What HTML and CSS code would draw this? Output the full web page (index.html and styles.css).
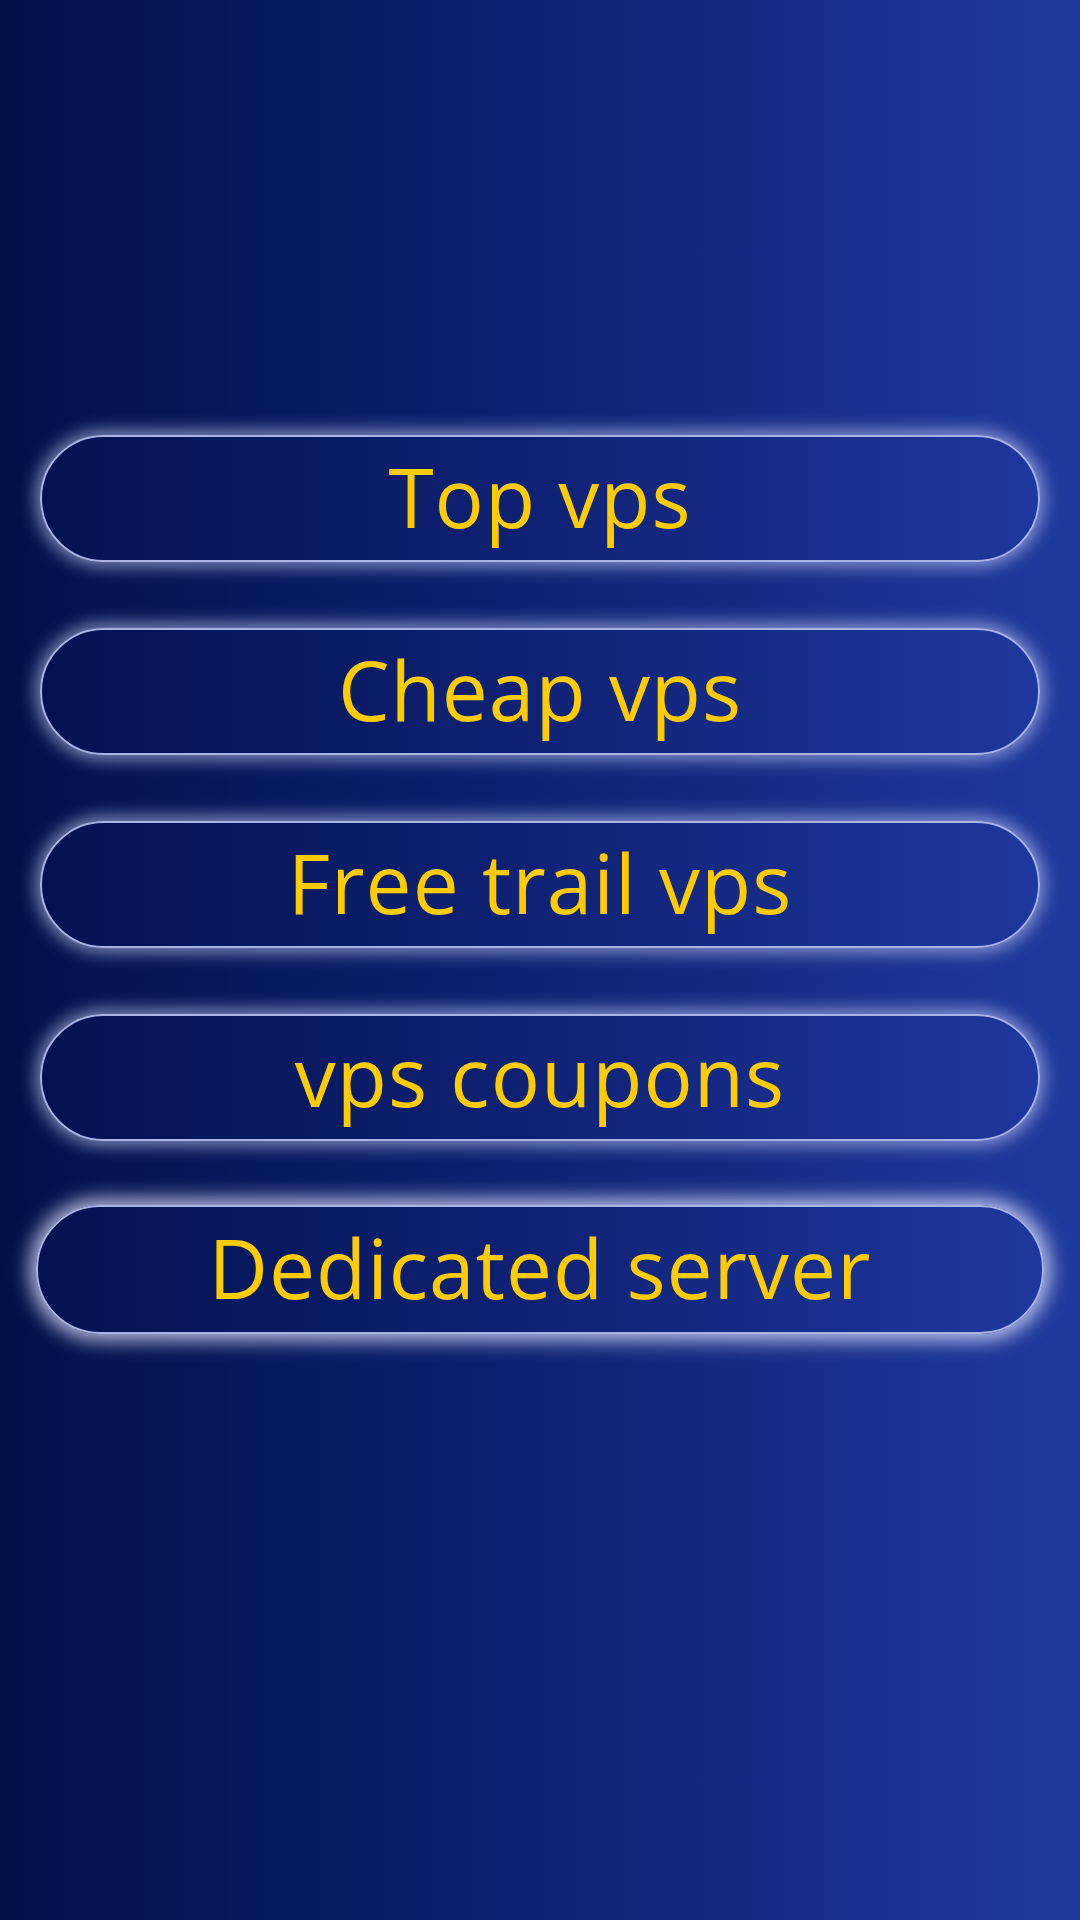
FILE: index.html
```html
<!DOCTYPE html>
<html lang="en">

<head>
    <meta charset="UTF-8">
    <meta name="viewport" content="width=device-width, initial-scale=1.0">
    <title>VPS</title>
    <link rel="stylesheet" href="styles.css">
</head>

<body>
    <div class="menu">
        <button class="menu-button">Top vps</button>
        <button class="menu-button">Cheap vps</button>
        <button class="menu-button">Free trail vps</button>
        <button class="menu-button">vps coupons</button>
        <button class="menu-button active">Dedicated server</button>
    </div>
</body>

</html>
```

FILE: styles.css
```css
html,
body {
    margin: 0;
    height: 100%;
}

body {
    font-family: "Open Sans", "Noto Sans", sans-serif;
    background: linear-gradient(to right, #001046 0%, #0d2070 45%, #1e3aa0 100%);
}

.menu {
    display: flex;
    flex-direction: column;
    align-items: center;
    gap: 66px;
    padding-top: 435px;
}

.menu-button {
    width: 1000px;
    height: 127px;
    padding: 0 0 6px 0;
    border: 2px solid #a8b4e4;
    border-radius: 64px;
    background: linear-gradient(to right, #03124f 0%, #0f2275 50%, #1d389f 100%);
    box-shadow: 0 0 18px 4px rgba(190, 200, 240, 0.7);
    color: #ffcc00;
    font-family: inherit;
    font-size: 82px;
    font-weight: 500;
    letter-spacing: 1px;
    line-height: 1;
    cursor: pointer;
}

.menu-button.active {
    width: 1008px;
    height: 129px;
    margin-top: -2px;
    box-shadow: 0 0 20px 6px rgba(220, 226, 250, 0.85);
}
```
